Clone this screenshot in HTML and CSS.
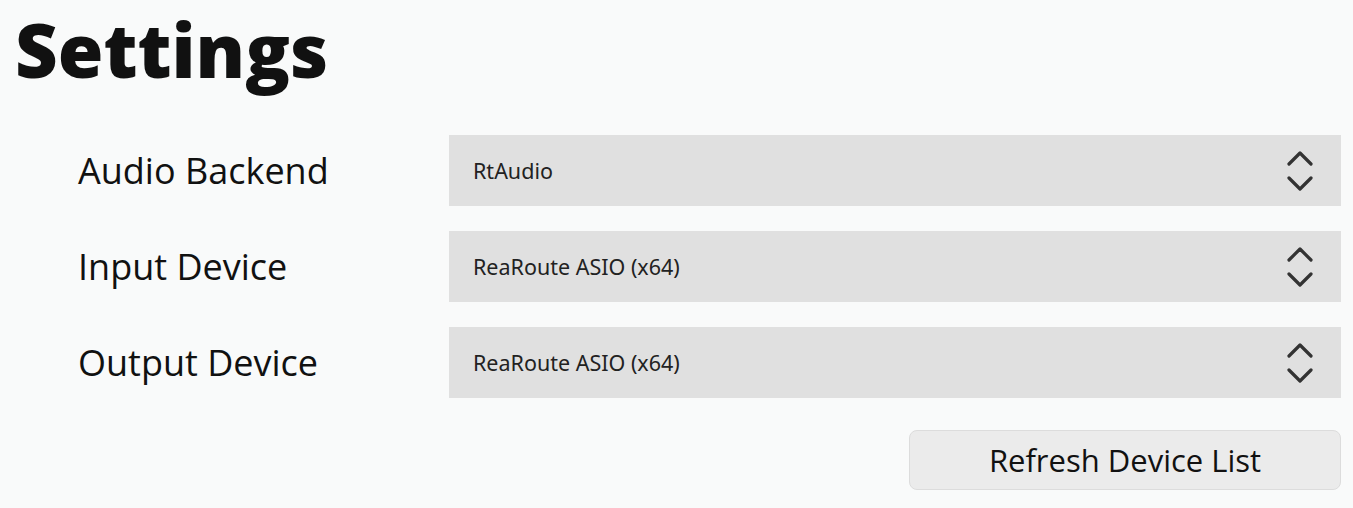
FILE: index.html
```html
<!DOCTYPE html>
<html lang="en">
<head>
<meta charset="utf-8">
<title>Settings</title>
<link rel="stylesheet" href="styles.css">
</head>
<body>
<main class="page">
  <h1 class="title">Settings</h1>
  <div class="form">
    <label class="label">Audio Backend</label>
    <div class="select"><span class="value">RtAudio</span>
      <svg class="chev" viewBox="0 0 26 40" width="26" height="40"><path d="M2 13 L13 2 L24 13 M2 27 L13 38 L24 27" fill="none" stroke="#333" stroke-width="3.2" stroke-linecap="round" stroke-linejoin="round"/></svg>
    </div>
    <label class="label">Input Device</label>
    <div class="select"><span class="value">ReaRoute ASIO (x64)</span>
      <svg class="chev" viewBox="0 0 26 40" width="26" height="40"><path d="M2 13 L13 2 L24 13 M2 27 L13 38 L24 27" fill="none" stroke="#333" stroke-width="3.2" stroke-linecap="round" stroke-linejoin="round"/></svg>
    </div>
    <label class="label">Output Device</label>
    <div class="select"><span class="value">ReaRoute ASIO (x64)</span>
      <svg class="chev" viewBox="0 0 26 40" width="26" height="40"><path d="M2 13 L13 2 L24 13 M2 27 L13 38 L24 27" fill="none" stroke="#333" stroke-width="3.2" stroke-linecap="round" stroke-linejoin="round"/></svg>
    </div>
    <button class="btn" type="button">Refresh Device List</button>
  </div>
</main>
</body>
</html>
```
FILE: styles.css
```css
html, body {
  margin: 0;
  padding: 0;
  background: #f9fafa;
}
body {
  font-family: "Open Sans", "Noto Sans", sans-serif;
  color: #111;
}
.page {
  padding: 0 12px 0 15px;
}
.title {
  margin: 0;
  font-family: "Open Sans", sans-serif;
  font-weight: 800;
  font-size: 74px;
  line-height: 100px;
  height: 110px;
  color: #111;
}
.form {
  margin-top: 25px;
  margin-left: 63px;
  display: grid;
  grid-template-columns: 371px 1fr;
  row-gap: 25px;
  align-items: center;
}
.label {
  font-family: "Open Sans", sans-serif;
  font-size: 36px;
  color: #111;
}
.select {
  height: 71px;
  background: #e0e0e0;
  display: flex;
  align-items: center;
  justify-content: space-between;
  padding: 0 28px 0 24px;
}
.value {
  font-family: "Noto Sans", sans-serif;
  font-size: 21.5px;
  color: #222;
}
.chev {
  display: block;
}
.btn {
  grid-column: 2;
  justify-self: end;
  margin-top: 7px;
  width: 432px;
  height: 60px;
  background: #ebebeb;
  border: 1.5px solid #dcdcdc;
  border-radius: 8px;
  font-family: "Open Sans", sans-serif;
  font-size: 31px;
  color: #111;
  padding: 0;
}
```
